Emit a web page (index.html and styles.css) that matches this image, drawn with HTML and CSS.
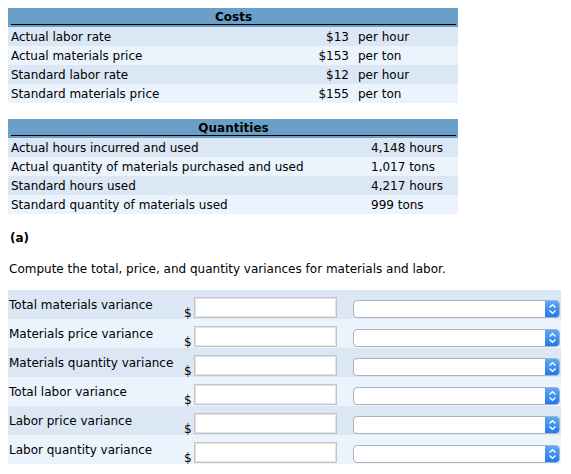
FILE: index.html
```html
<!DOCTYPE html>
<html>
<head>
<meta charset="utf-8">
<link rel="stylesheet" href="styles.css">
</head>
<body>
<div class="page">
  <div class="data costs">
    <div class="head"><span class="head-text">Costs</span></div>
    <div class="row dark"><span class="lbl">Actual labor rate</span><span class="amt">$13</span><span class="unit">per hour</span></div>
    <div class="row light"><span class="lbl">Actual materials price</span><span class="amt">$153</span><span class="unit">per ton</span></div>
    <div class="row dark"><span class="lbl">Standard labor rate</span><span class="amt">$12</span><span class="unit">per hour</span></div>
    <div class="row light"><span class="lbl">Standard materials price</span><span class="amt">$155</span><span class="unit">per ton</span></div>
  </div>

  <div class="data qty">
    <div class="head"><span class="head-text">Quantities</span></div>
    <div class="row dark"><span class="lbl">Actual hours incurred and used</span><span class="val">4,148 hours</span></div>
    <div class="row light"><span class="lbl">Actual quantity of materials purchased and used</span><span class="val">1,017 tons</span></div>
    <div class="row dark"><span class="lbl">Standard hours used</span><span class="val">4,217 hours</span></div>
    <div class="row light"><span class="lbl">Standard quantity of materials used</span><span class="val">999 tons</span></div>
  </div>

  <p class="part">(a)</p>
  <p class="instr">Compute the total, price, and quantity variances for materials and labor.</p>

  <div class="answers">
    <div class="arow dark"><span class="alabel">Total materials variance</span><span class="dollar">$</span><span class="field"></span><span class="sel"><span class="btn"><svg width="9" height="12" viewBox="0 0 9 12"><path d="M1.5 4.5 L4.5 1.8 L7.5 4.5 M1.5 7.5 L4.5 10.2 L7.5 7.5" fill="none" stroke="#fff" stroke-width="1.4"/></svg></span></span></div>
    <div class="arow light"><span class="alabel">Materials price variance</span><span class="dollar">$</span><span class="field"></span><span class="sel"><span class="btn"><svg width="9" height="12" viewBox="0 0 9 12"><path d="M1.5 4.5 L4.5 1.8 L7.5 4.5 M1.5 7.5 L4.5 10.2 L7.5 7.5" fill="none" stroke="#fff" stroke-width="1.4"/></svg></span></span></div>
    <div class="arow dark"><span class="alabel">Materials quantity variance</span><span class="dollar">$</span><span class="field"></span><span class="sel"><span class="btn"><svg width="9" height="12" viewBox="0 0 9 12"><path d="M1.5 4.5 L4.5 1.8 L7.5 4.5 M1.5 7.5 L4.5 10.2 L7.5 7.5" fill="none" stroke="#fff" stroke-width="1.4"/></svg></span></span></div>
    <div class="arow light"><span class="alabel">Total labor variance</span><span class="dollar">$</span><span class="field"></span><span class="sel"><span class="btn"><svg width="9" height="12" viewBox="0 0 9 12"><path d="M1.5 4.5 L4.5 1.8 L7.5 4.5 M1.5 7.5 L4.5 10.2 L7.5 7.5" fill="none" stroke="#fff" stroke-width="1.4"/></svg></span></span></div>
    <div class="arow dark"><span class="alabel">Labor price variance</span><span class="dollar">$</span><span class="field"></span><span class="sel"><span class="btn"><svg width="9" height="12" viewBox="0 0 9 12"><path d="M1.5 4.5 L4.5 1.8 L7.5 4.5 M1.5 7.5 L4.5 10.2 L7.5 7.5" fill="none" stroke="#fff" stroke-width="1.4"/></svg></span></span></div>
    <div class="arow light"><span class="alabel">Labor quantity variance</span><span class="dollar">$</span><span class="field"></span><span class="sel"><span class="btn"><svg width="9" height="12" viewBox="0 0 9 12"><path d="M1.5 4.5 L4.5 1.8 L7.5 4.5 M1.5 7.5 L4.5 10.2 L7.5 7.5" fill="none" stroke="#fff" stroke-width="1.4"/></svg></span></span></div>
  </div>
</div>
</body>
</html>
```

FILE: styles.css
```css
html, body {
  margin: 0;
  padding: 0;
  background: #ffffff;
}
body {
  font-family: "DejaVu Sans", Verdana, sans-serif;
  font-size: 12px;
  color: #000;
}
.page {
  padding: 8px 0 0 8px;
}
.data {
  width: 450px;
}
.qty {
  margin-top: 16px;
}
.head {
  height: 19px;
  background: #6aa0c8;
  box-sizing: border-box;
  padding: 0 2px 2px 3px;
  display: flex;
}
.head-text {
  flex: 1;
  border-bottom: 1px solid #000;
  text-align: center;
  font-weight: bold;
  line-height: 15px;
  padding-top: 2px;
  box-sizing: border-box;
}
.row {
  display: grid;
  height: 19px;
  line-height: 18px;
  padding-top: 1px;
  box-sizing: border-box;
  white-space: nowrap;
}
.costs .row {
  grid-template-columns: 281px 63px 106px;
}
.qty .row {
  grid-template-columns: 360px 90px;
}
.dark { background: #dbe7f4; }
.light { background: #ebf3fd; }
.lbl {
  padding-left: 3px;
}
.amt {
  text-align: right;
  padding-right: 3px;
}
.unit {
  padding-left: 6px;
}
.val {
  padding-left: 3px;
}
.part {
  margin: 17px 0 0 2px;
  font-weight: bold;
  line-height: 15px;
}
.instr {
  margin: 14px 0 0 1px;
  line-height: 16px;
  padding-top: 1px;
}
.answers {
  margin-top: 13px;
  width: 553px;
}
.arow {
  display: grid;
  grid-template-columns: 174px 12px 143px 16px 207px;
  height: 29px;
  box-sizing: border-box;
  white-space: nowrap;
}
.alabel {
  padding: 8px 0 0 1px;
  line-height: 15px;
}
.dollar {
  padding-top: 16px;
  line-height: 15px;
  padding-left: 2px;
}
.field {
  margin-top: 7px;
  height: 21px;
  box-sizing: border-box;
  border: 1px solid #c4c4c4;
  box-shadow: inset 0 0 0 1px #e4e4e4;
  background: #fff;
}
.sel {
  grid-column: 5;
  margin-top: 10px;
  height: 18px;
  box-sizing: border-box;
  border: 1px solid #acb2ba;
  border-radius: 4px;
  background: #fff;
  display: flex;
  justify-content: flex-end;
  overflow: hidden;
}
.btn {
  width: 15px;
  margin: -1px -1px -1px 0;
  background: linear-gradient(#5eacfa, #1e76ea);
  display: flex;
  align-items: center;
  justify-content: center;
  border-radius: 0 4px 4px 0;
}
.btn svg {
  display: block;
}
```
